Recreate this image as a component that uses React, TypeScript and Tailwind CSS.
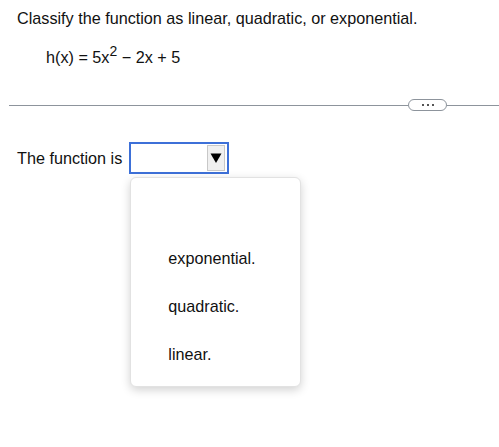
const options = ["", "exponential.", "quadratic.", "linear."];

export default function App() {
  return (
    <div className="relative w-[499px] h-[447px] bg-white text-[16.2px] leading-[18px] text-[#111] font-['Liberation_Sans',Arial,sans-serif]">
      <div className="pt-[9px] pl-[17px]">Classify the function as linear, quadratic, or exponential.</div>

      <div className="pt-[21px] pl-[46px]">
        h(x) = 5x<sup className="text-[14px] leading-none relative top-[-7px] align-baseline">2</sup> − 2x + 5
      </div>

      {/* divider with more button */}
      <div className="mt-[33px] flex items-center pl-[9px]">
        <div className="flex-1 h-px bg-[#8d949c]" />
        <div className="w-[39px] h-[12px] rounded-full border border-[#8d949c] bg-white flex items-center justify-center gap-[3px]">
          <span className="w-[2px] h-[2px] bg-[#555]" />
          <span className="w-[2px] h-[2px] bg-[#555]" />
          <span className="w-[2px] h-[2px] bg-[#555]" />
        </div>
        <div className="w-[52px] h-px bg-[#8d949c]" />
      </div>

      <div className="mt-[31px] pl-[17px] flex items-center gap-[7px]">
        <span>The function is</span>
        <div className="relative">
          <div className="w-[100px] h-[32px] border-2 border-[#3d70d8] bg-white flex items-center justify-end pr-[2px]">
            <div className="w-[18px] h-[26px] bg-[#f0f0f0] border border-[#c8c8c8] flex items-center justify-center">
              <svg width="12" height="12" viewBox="0 0 12 12">
                <path d="M0.5 1.5 H11.5 L6 11 Z" fill="#000" />
              </svg>
            </div>
          </div>
          <div className="absolute left-[1px] top-[35px] w-[171px] bg-white rounded-[6px] border border-[#e2e2e2] shadow-[0_3px_10px_rgba(0,0,0,0.18)] py-[8px]">
            {options.map((o, i) => (
              <div key={i} className="h-[48px] py-[15px] pl-[37px]">
                {o}
              </div>
            ))}
          </div>
        </div>
      </div>
    </div>
  );
}
